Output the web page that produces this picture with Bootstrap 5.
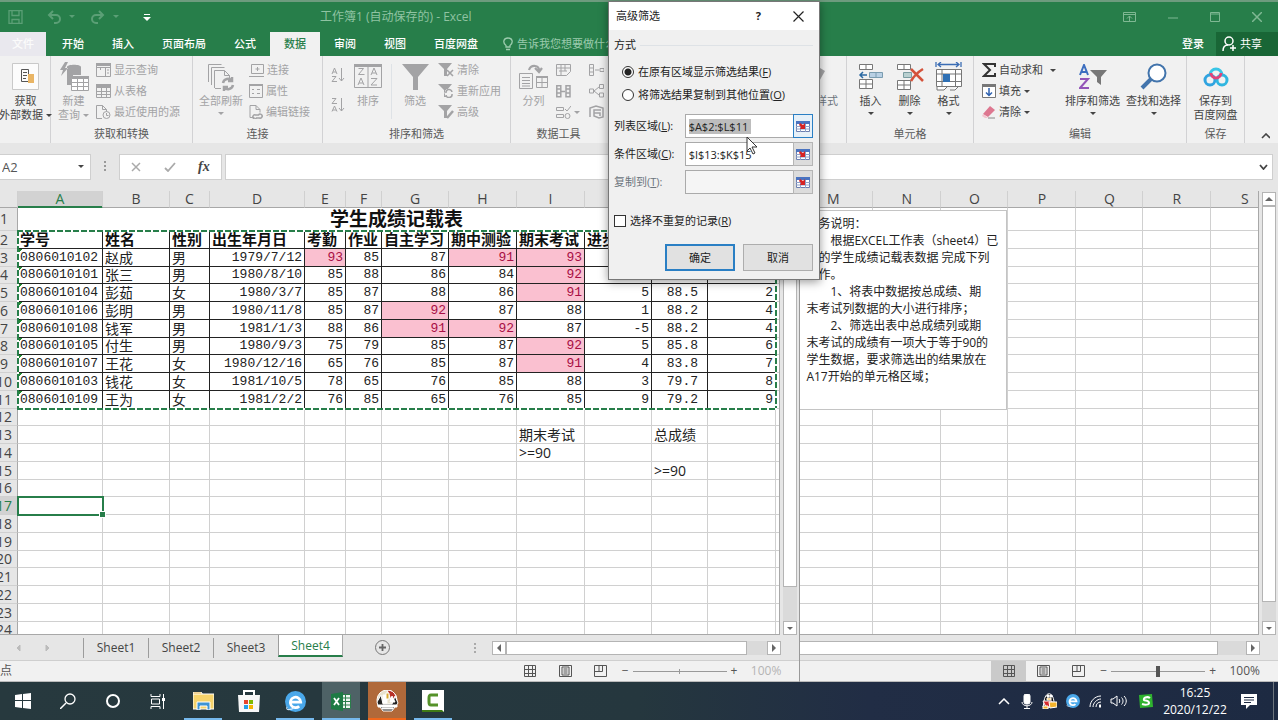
<!DOCTYPE html>
<html lang="zh-CN">
<head>
<meta charset="utf-8">
<meta name="viewport" content="width=device-width, initial-scale=1">
<title>工作簿1 - Excel</title>
<link rel="stylesheet" href="https://cdn.jsdelivr.net/npm/bootstrap@5.3.0/dist/css/bootstrap.min.css">
<style>
:root{--xl:#277e4a;--line:#d0d0d0;--dim:#a3a3a5;--ui:"Open Sans","Noto Sans CJK SC",sans-serif}
html,body{height:100%}
body{font:11px/14px var(--ui);color:#444;background:#e6e6e6;overflow:hidden}
svg{display:block;flex:none;fill:none;stroke:currentColor}
button{font:inherit;color:inherit;background:none;border:0;padding:0}
.titlebar{height:32px;background:var(--xl);border-top:2px solid #6d9b7e;color:#8fc3a2;font-size:12px}
.qat{width:320px;padding-left:8px;color:#5b9f76}
.winbtns{padding-right:16px;color:#7fb893;gap:32px}
.tabs{height:24px;background:var(--xl);color:#fff}
.tabs a{color:#fff;text-decoration:none;padding:0 14px;height:24px;line-height:23px;font-weight:500;white-space:nowrap}
.tabs a.filetab{background:#e9e8ee;color:#fbfbfb;width:46px;margin-right:2px;padding:0 12px}
.tabs a.current{background:#f1f1f1;color:var(--xl)}
.tell{color:#9bcbad;padding-left:11px}
.share{background:#196636;height:24px;padding:0 16px 0 6px}
.ribbon{height:88px;background:#f1f1f1}
.grp{padding-top:4px;border-right:1px solid #d2d2d4;flex:none}
.grp .tools{height:63px}
.grp .caption{text-align:center;line-height:21px;color:#5a5a5a;white-space:nowrap}
.big{display:flex;flex-direction:column;align-items:center;white-space:nowrap;height:63px}
.big .pic{height:34px;display:flex;align-items:center}
.off{color:var(--dim)}
.smallcol button{display:flex;align-items:center;height:21px;gap:3px;white-space:nowrap}
.dn{display:inline-block;border:3px solid transparent;border-top-color:currentColor;border-bottom:0;vertical-align:middle}
.g-get{width:51px}.g-query{width:142px}.g-link{width:130px}.g-sort{width:188px}.g-tools{width:120px}.g-cells{width:127px}.g-edit{width:213px}.g-save{width:58px}
.g-get .big{width:51px}.g-query .big{width:45px}.g-link .big{width:56px}.g-cells .big{width:39px}.g-edit .big{width:61px}.g-save .big{width:57px}
.g-edit .smallcol{width:76px}
.g-tools .smallcol{width:33px}
.fxrow{padding:11px 5px 0 0;height:49px}
.fxrow>*{height:26px;background:#fff;border:1px solid #cfcfcf}
.namebox{width:91px;border-left:0;padding-right:6px}
.namebox input{width:70px;border:0;font:13px var(--ui);color:#555;padding:0 2px}
.fxrow .grip{width:28px;border:0;background:none}
.fxrow .fxbtns{width:103px;margin-right:3px}
.fxrow .fx{border:0;font:13px var(--ui)}
.fxname{font:italic bold 14px "Liberation Serif",serif}
.panes{min-height:0}
.pane-l{flex:800 1 0}.pane-r{flex:478 1 0}
.pane-l,.pane-r{min-width:0;overflow:hidden}
.pane-r{border-left:1px solid #999}
.gridwrap{background:#fff;border-right:1px solid #a8a8a8;border-bottom:1px solid #a8a8a8;overflow:hidden;position:relative;min-width:0}
.gridarea{min-height:0;overflow:hidden}
table.sheet{table-layout:fixed;border-collapse:separate;border-spacing:0;width:1px}
.pane-l table.sheet{margin-left:-9px}
.sheet th,.sheet td{padding:0 2px;height:18px;line-height:17px;border-right:1px solid var(--line);border-bottom:1px solid var(--line);white-space:nowrap;font-size:14px;font-weight:400;color:#222;overflow:visible}
.sheet tbody tr:nth-child(4n)>*{height:17px;line-height:16px}
.sheet thead th{background:#e6e6e6;text-align:center;border-bottom-color:#a8a8a8;font:14px/16px var(--ui);color:#444;height:17px}
.pane-r .sheet thead th:first-child{padding-right:8px}
.sheet tbody th{background:#e6e6e6;text-align:center;border-right-color:#a8a8a8;font-family:var(--ui);color:#444;padding:0}
.sheet tbody tr:first-child>*{height:23px;line-height:22px}
.sheet thead th.hot{background:#d2d2d2;color:var(--xl);box-shadow:inset 0 -1px var(--xl);border-bottom-color:var(--xl)}
.sheet tbody th.hot{background:#d2d2d2;color:var(--xl)}
.sheet td.heading{font-size:19px;font-weight:700;text-align:center;color:#111}
.sheet td.bk{border-color:#222}
.sheet td.hd{font-size:15px;font-weight:700;color:#111}
.sheet td.num{font:13px/17px "Liberation Mono",monospace;text-align:right}
.sheet tr:nth-child(4n) td.num{line-height:16px}
.sheet td.ids{text-align:left;background:linear-gradient(135deg,#1e8a2e 3px,transparent 3px)}
.sheet td.avg{padding-right:9px}
.sheet td.hi{background:#fac0d0;color:#a80f45}
.sheet td.sel{position:relative;outline:2px solid var(--xl);outline-offset:-1px}
.sheet td.sel::after{content:"";position:absolute;right:-3px;bottom:-3px;width:5px;height:5px;background:var(--xl);box-shadow:0 0 0 1px #fff}
.ants{position:absolute;left:17px;top:39px;width:760px;height:180px;pointer-events:none;
background:repeating-linear-gradient(90deg,var(--xl) 0 6px,#fff 6px 8px) 0 0/100% 2px no-repeat,repeating-linear-gradient(90deg,var(--xl) 0 6px,#fff 6px 8px) 0 100%/100% 2px no-repeat,repeating-linear-gradient(var(--xl) 0 6px,#fff 6px 8px) 0 0/2px 100% no-repeat,repeating-linear-gradient(var(--xl) 0 6px,#fff 6px 8px) 100% 0/2px 100% no-repeat}
.note{position:absolute;left:0;top:19px;width:207px;height:200px;background:#fff;border:1px solid #c4c4c4;border-left:0;padding:4px 6px;font:12px/17px var(--ui);color:#222;white-space:pre}
.vscroll{width:14px;margin:1px 2px 0 3px;background:#dadada}
.arrowbox{width:14px;height:14px;background:#fff;border:1px solid #b4b4b4;display:flex;align-items:center;justify-content:center;flex:none;color:#666}
.vthumb{background:#fff;border:1px solid #b4b4b4}
.pane-l .vthumb{margin-bottom:34px}.pane-r .vthumb{margin-bottom:19px}
.sheetbar{height:26px;border-bottom:1px solid #cfcfcf}
.sheetnav{width:83px;color:#bbb}
.hscroll{height:14px;background:#dadada;margin:6px 18px 0 0}
.pane-l .hscroll{width:289px}
.hthumb{background:#fff;border:1px solid #b4b4b4;margin-right:20px}
.sheettab{height:20px;width:65px;border-left:1px solid #9c9c9c!important;font:12px/16px var(--ui);margin-top:3px;text-align:center}
.sheettab.current{background:#fff;color:var(--xl);border-bottom:2px solid var(--xl)!important;height:23px;margin-top:-1px;border-right:1px solid #aaa!important;line-height:24px}
.status{height:21px;background:#f1f1f1;font-size:12px;border-bottom:1px solid #bbb;color:#555;padding-right:18px}
.view{width:35px;height:20px;display:flex;align-items:center;justify-content:center}
.view.on{background:#cacaca}
.zoomer{appearance:none;width:94px;height:12px;background:linear-gradient(#999,#999) 0 50%/100% 1px no-repeat;margin:0 4px}
.zoomer::-webkit-slider-thumb{appearance:none;width:4px;height:11px;background:#555}
.zoomer.idle::-webkit-slider-thumb{width:1px;height:5px;background:#999}
.pct{width:44px;text-align:right;color:#555}
.pct.dimmed{color:#b4b4b4}
.taskbar{height:38px;background:linear-gradient(90deg,#27393e 0,#25373e 50%,#212d45 68%,#1d2a42 100%);color:#fff}
.taskbar .tb{width:45px;height:38px;display:flex;align-items:center;justify-content:center}
.taskbar .app{width:46px;border-left:4px solid transparent;border-right:4px solid transparent;background-clip:padding-box}
.run{box-shadow:inset 0 -2px #76b9ed}
.tb.xl-app{background-color:#4e6266}
.tb.rec-app{background-color:#b0693a;box-shadow:inset 0 -2px #f0671c}
.tray .ti{width:23px;display:flex;justify-content:center}
.clock{font-size:12px;line-height:17px;width:68px}
.dlg{position:absolute;left:608px;top:1px;width:212px;height:279px;background:#f0f0f0;border:1px solid #777;box-shadow:0 2px 9px rgba(0,0,0,.4);color:#222;z-index:5}
.dlg .cap{height:28px;background:#fff;padding:0 15px 0 7px}
.dlg .inner{padding:8px 6px 0 5px}
.dlg label{white-space:nowrap}
.dlg input[type=radio],.dlg input[type=checkbox]{appearance:none;width:12px;height:12px;border:1px solid #333;background:#fff;margin:0;flex:none}
.dlg input[type=radio]{border-radius:50%}
.dlg input[type=radio]:checked{background:radial-gradient(#222 0 3px,#fff 4px)}
.opt{height:23px;gap:4px;padding-left:8px}
.field{height:24px;margin-bottom:4px}
.field label{width:71px}
.field input{width:109px;min-width:0;height:24px;border:1px solid #aaa;border-right:0;background:#fff;font:11px var(--ui);padding:0 3px;color:#222}
.field input.picked{background:linear-gradient(#bdbdbd,#bdbdbd) 3px 50%/62px 15px no-repeat,#fff}
.field input:disabled{background:#f5f5f5}
.field button{width:20px;height:24px;border:1px solid #b5b5b5;background:#dcdcdc;display:flex;align-items:center;justify-content:center}
.field button.focus{border-color:#2a7fc4;background:#e6f0f8}
.act{width:70px;height:27px;background:#e1e1e1;border:1px solid #adadad}
.act.primary{border:2px solid #2a7fc4}
.pointer{position:absolute;left:137px;top:134px}
</style>
</head>
<body class="d-flex flex-column">
<svg width="0" height="0" class="position-absolute" aria-hidden="true">
<defs>
<g id="i-grid"><path d="M.5 .5h11v11h-11zM4.500 .5v11M8.500 .5v11M.5 4.500h11M.5 8.500h11"/></g>
<g id="i-page"><path d="M.5 .5h12v11h-12zM3 2h7v8H3zM4.500 4h4M4.500 6h4M4.500 8h4"/></g>
<g id="i-break"><path d="M.5 .5h12v11h-12zM.5 6.500h8v-6M5 .5v6"/></g>
<g id="i-fun"><path fill="currentColor" stroke="none" d="M0 0h14L9 6v7H6V6z"/></g>
<g id="i-pick"><path fill="#fff" stroke="#6b7fb0" d="M.5 .5h13v10h-13z"/><path fill="#4a73c0" stroke="none" d="M0 0h14v3H0z"/><path stroke="#8fa0c8" d="M0 5.500h14M0 8h14M4.500 3v8M9.500 3v8"/><path fill="#d62222" stroke="none" d="M4 2l3 2 2-2v6H4l1-2-2-2z"/></g>
<g id="i-ie"><circle cx="10" cy="10" r="10" fill="#4aa8ea" stroke="none"/><path stroke="#fff" stroke-width="2.600" d="M5 10.500h10a5 5 0 1 0-1.500 4"/><path stroke="#cfe9ff" d="M2 15C0 19 6 18 9 16"/></g>
</defs>
</svg>

<header class="titlebar d-flex align-items-center">
  <div class="qat d-flex align-items-center">
    <svg width="15" height="14" viewBox="0 0 15 14"><path d="M1 .5h13v13H1zM4 .5v5h7v-5M4 13.500v-4h7v4" stroke-width="1.300"/></svg>
    <svg width="14" height="14" viewBox="0 0 14 14" class="ms-4"><path stroke-width="2" d="M6 1L2 5l4 4M2 5h7a4 4 0 0 1 0 8H7"/></svg><i class="dn ms-2"></i>
    <svg width="14" height="14" viewBox="0 0 14 14" class="ms-3"><path stroke-width="2" d="M8 1l4 4-4 4M12 5H5a4 4 0 0 0 0 8h2"/></svg><i class="dn ms-2"></i>
    <svg width="8" height="8" viewBox="0 0 8 8" class="ms-4 text-white"><path d="M1 1.500h6"/><path fill="currentColor" stroke="none" d="M0 4h8L4 8z"/></svg>
  </div>
  <div class="flex-grow-1">工作簿1 (自动保存的) - Excel</div>
  <div class="winbtns d-flex align-items-center lh-1">
    <svg width="13" height="10" viewBox="0 0 13 10"><path d="M.5 .5h12v9H.5zM.5 2.500h12M6.500 9V4M4 6.500L6.500 4 9 6.500"/></svg>
    <svg width="10" height="10" viewBox="0 0 10 10"><path d="M0 6h10"/></svg>
    <svg width="10" height="10" viewBox="0 0 10 10"><path d="M.5 .5h9v9h-9zM0 2h10"/></svg>
    <svg width="10" height="10" viewBox="0 0 10 10"><path stroke-width="1.500" d="M0 0l10 10M10 0L0 10"/></svg>
  </div>
</header>

<nav class="tabs d-flex align-items-center">
  <a href="#" class="filetab">文件</a><a href="#">开始</a><a href="#">插入</a><a href="#">页面布局</a><a href="#">公式</a><a href="#" class="current">数据</a><a href="#">审阅</a><a href="#">视图</a><a href="#">百度网盘</a>
  <div class="tell d-flex align-items-center gap-1 text-nowrap flex-grow-1">
    <svg width="10" height="14" viewBox="0 0 10 14"><path stroke-width="1.300" d="M3 10V8.500C-1 5 1 1 5 1s6 4 2 7.500V10zM3 12.500h4"/></svg>告诉我您想要做什么...</div>
  <a href="#" class="pe-2 me-1">登录</a>
  <button class="share d-flex align-items-center gap-1 text-nowrap"><svg width="14" height="15" viewBox="0 0 14 15"><circle cx="7" cy="5" r="4" stroke-width="1.500"/><path stroke-width="1.500" d="M1 15c0-4 2-6 5-6M8 12h6M11 9v6"/></svg>共享</button>
</nav>

<div class="ribbon d-flex overflow-hidden">
  <div class="grp g-get"><button class="big"><span class="pic"><svg width="27" height="27" viewBox="0 0 27 27"><path fill="#fcfcfc" stroke="#c9c9c9" d="M.5 .5h26v26H.5z"/><path stroke="#555" d="M9.500 6.500h7v12h-7zM11 9.500h4M11 12.500h4M11 15.500h3"/><path fill="#e9b565" stroke="none" d="M16 11h6v9h-6z"/></svg></span><span>获取</span><span>外部数据 <i class="dn"></i></span></button></div>

  <div class="grp g-query"><div class="tools d-flex off">
    <button class="big"><span class="pic"><svg width="30" height="30" viewBox="0 0 30 30"><path fill="currentColor" stroke="none" d="M6 0L1 8h3l-2 6 7-8H6l3-6zM8 5c0-3 14-3 14 0v8h-8v10H8zM12 14h18v3H12z"/><path fill="#fff" d="M12.500 16.500h17v12h-17zM12 20.500h18M12 24.500h18M18.500 16v12M24.500 16v12"/></svg></span><span>新建</span><span>查询 <i class="dn"></i></span></button>
    <div class="smallcol">
      <button><svg width="15" height="14" viewBox="0 0 15 14"><path d="M.5 .5h14v13H.5zM0 4.500h15M9.500 4v9M11 7h2M11 10h2M4.500 4v3"/><path fill="currentColor" stroke="none" d="M0 0h15v3H0z"/></svg>显示查询</button>
      <button><svg width="15" height="14" viewBox="0 0 15 14"><path d="M.5 .5h14v13H.5zM0 7.500h15M0 10.500h15M5.500 4v9M10.500 4v9"/><path fill="currentColor" stroke="none" d="M0 0h15v4H0z"/></svg>从表格</button>
      <button><svg width="15" height="14" viewBox="0 0 15 14"><path d="M6 13.500H.5V.5h6l4 4v2M6.500 .5v4h4"/><circle cx="10.500" cy="10" r="3.500"/><path d="M10.500 8v2.500h2"/></svg>最近使用的源</button>
    </div></div><div class="caption">获取和转换</div></div>

  <div class="grp g-link"><div class="tools d-flex off">
    <button class="big"><span class="pic"><svg width="28" height="28" viewBox="0 0 28 28"><path d="M1.500 19V1.500h13M4.500 22V4.500h13M7.500 25V7.500h10l5 5v3M17.500 7.500v5h5M8 25.500h6"/><path stroke-width="2.500" d="M16 20a5 5 0 0 1 9-2M26 22a5 5 0 0 1-9 2M25 14v4h-4M17 28v-4h4"/></svg></span><span>全部刷新</span><i class="dn mt-1"></i></button>
    <div class="smallcol">
      <button><svg width="15" height="13" viewBox="0 0 15 13"><path d="M2.500 .5h12v9h-12zM0 12.500h15M8.500 3v4M6.500 5h4"/></svg>连接</button>
      <button><svg width="14" height="14" viewBox="0 0 14 14"><path d="M.5 .5h13v13H.5zM3 5.500h2M8 5.500h3M3 9.500h2M8 9.500h3"/><path stroke-width="2" d="M0 1h14"/></svg>属性</button>
      <button><svg width="14" height="14" viewBox="0 0 13 14"><path d="M5 12.500H.5V.5h6l4 4v3M6.500 .5v4h4"/><path stroke-width="1.500" d="M6 10a2 2 0 1 0 1 3h3a2 2 0 1 0-1-3z"/></svg>编辑链接</button>
    </div></div><div class="caption">连接</div></div>

  <div class="grp g-sort"><div class="tools d-flex off">
    <div class="d-flex flex-column gap-3 pt-2 ps-2">
      <button><svg width="14" height="14" viewBox="0 0 14 14"><path d="M1 6l2.500-6L6 6M2 4h3M1 8.500h4l-4 5h5M10.500 0v13M8 10l2.500 3L13 10"/></svg></button>
      <button><svg width="14" height="14" viewBox="0 0 14 14"><path d="M1 .5h4L1 5.500h5M1 13.500L3.500 8 6 13.500M2 12h3M10.500 0v13M8 10l2.500 3L13 10"/></svg></button></div>
    <button class="big ms-2"><span class="pic"><svg width="28" height="25" viewBox="0 0 28 25"><path d="M.5 .5h27v23H.5zM14 3v20M4.500 4.500h5l-5 6h6M4 21l3-7 3 7M5 19h4M17 11l3-7 3 7M18 9h4M17 14.500h6l-6 6.500h6"/><path fill="currentColor" stroke="none" d="M0 0h28v3H0z"/></svg></span><span class="px-1">排序</span></button>
    <div class="border-start mx-2 my-1"></div>
    <button class="big"><span class="pic"><svg width="27" height="26" viewBox="0 0 27 26"><path fill="currentColor" stroke="none" d="M0 0h27L16 13v13h-5V13z"/></svg></span><span class="px-1">筛选</span></button>
    <div class="smallcol ps-2">
      <button><svg width="16" height="14" viewBox="0 0 16 14"><use href="#i-fun"/><path stroke-width="1.600" d="M9 7l6 6M15 7l-6 6"/></svg>清除</button>
      <button><svg width="16" height="14" viewBox="0 0 16 14"><use href="#i-fun"/><circle cx="11" cy="9" r="4" stroke="#f1f1f1" fill="#f1f1f1"/><path stroke-width="1.500" d="M8 9a3 3 0 0 1 6-1M14 10a3 3 0 0 1-6 1"/></svg>重新应用</button>
      <button><svg width="16" height="14" viewBox="0 0 16 14"><use href="#i-fun"/><path stroke-width="2.500" d="M9 13l6-7"/></svg>高级</button>
    </div></div><div class="caption">排序和筛选</div></div>

  <div class="grp g-tools"><div class="tools d-flex off">
    <button class="big mx-2"><span class="pic"><svg width="29" height="26" viewBox="0 0 29 26"><path d="M.5 9.500h13v15H.5zM3 13.500h8M3 16.500h8M3 19.500h8M3 22h8M17.500 12.500h11v11h-11zM23 14v9M18 18.500h10"/><path stroke-width="2.200" d="M10 6c2-6 11-5 10 1M16 4l4 4 3-4"/><path stroke-width="2" d="M17 13h12"/></svg></span><span>分列</span></button>
    <div class="smallcol">
      <button><svg width="15" height="14" viewBox="0 0 15 14"><path d="M.5 1.500h14v7l-4 4H.5zM0 5h14M3 8h8M5 2v10M9 2v6"/></svg></button>
      <button><svg width="15" height="13" viewBox="0 0 15 13"><path stroke-width="1.500" d="M.8 .8h4v11h-4zM10 .8h4v11h-4zM5 6.500h4M1 4h3M1 8h3M10 4h4M10 8h4"/></svg></button>
      <button><svg width="15" height="13" viewBox="0 0 15 13"><path d="M.5 1.500h7v3h-7zM.5 8.500h7v3h-7zM9 3l2 2 4-5"/><circle cx="11.500" cy="10" r="2.500"/></svg><i class="dn"></i></button></div>
    <div class="smallcol">
      <button><svg width="15" height="13" viewBox="0 0 15 13"><path d="M.5 .5h4v11h-4zM1 4h3M1 8h3M6 6h4M11 4.500h4v3h-4z"/></svg></button>
      <button><svg width="15" height="14" viewBox="0 0 15 14"><path d="M.5 5h4v4h-4zM10.500 .5h4v4h-4zM10.500 9h4v4h-4zM5 7l5-4M5 7l5 4"/></svg></button>
      <button><svg width="15" height="14" viewBox="0 0 15 14"><path stroke-width="1.500" d="M1 12V3l6-2 7 2v9l-4 1-5-2V5h7M5 8h6v3"/></svg></button></div>
  </div><div class="caption pe-4">数据工具</div></div>

  <div class="grp ms-auto pe-2"><button class="big off"><span class="pic"><svg width="30" height="28" viewBox="0 0 30 28"><path d="M.5 3.500h22v18H.5z"/><path fill="currentColor" stroke="none" d="M13 19L24 5l5 3-8 14-8 2z"/></svg></span><span class="text-secondary">单元格样式</span></button></div>

  <div class="grp g-cells"><div class="tools d-flex ps-1">
    <button class="big"><span class="pic"><svg width="26" height="26" viewBox="0 0 26 26"><path fill="#fff" stroke="#777" d="M1.500 .5h13v5h-13zM8 .5v5M1.500 15.500h13v9h-13zM8 15v9M1.500 20h13"/><path fill="#b9d0e4" stroke="#7a9cb0" d="M11.500 8.500h13v5h-13zM18 8v5"/><path stroke="#2c6aa3" stroke-width="1.500" d="M9 11H2M5 8l-3 3 3 3"/></svg></span><span>插入</span><i class="dn mt-1"></i></button>
    <button class="big"><span class="pic"><svg width="28" height="26" viewBox="0 0 28 26"><path fill="#fff" stroke="#777" d="M1.500 .5h13v5h-13zM8 .5v5M1.500 16.500h13v9h-13zM8 16v9M1.500 21h13"/><path fill="#b9d0d0" stroke="#7a9ca0" d="M7.500 8.500h8v5h-8z"/><path stroke="#d4523a" stroke-width="2.500" d="M15 5l12 12M27 5C22 8 18 12 15 17"/></svg></span><span>删除</span><i class="dn mt-1"></i></button>
    <button class="big"><span class="pic"><svg width="27" height="29" viewBox="0 0 27 29"><path stroke="#3a6cb4" stroke-width="1.300" d="M1 0v5M26 0v5M3 2.500h21M6 0L3 2.500 6 5M21 0l3 2.500L21 5"/><path fill="#fff" stroke="#777" d="M1.500 7.500h25v17h-25zM7 7v17M20.500 7v17M1 12h26M1 19.500h26M2 25v3h7l3-3M15 28h5l3-3"/><path fill="#2f70b4" stroke="none" d="M8 12h7v8H8z"/></svg></span><span>格式</span><i class="dn mt-1"></i></button>
  </div><div class="caption">单元格</div></div>

  <div class="grp g-edit"><div class="tools d-flex ps-2">
    <div class="smallcol me-1">
      <button><svg width="14" height="14" viewBox="0 0 14 14"><path stroke="#333" stroke-width="2" d="M13 4V1H2l6 6-6 6h11v-3"/></svg>自动求和 <i class="dn ms-1"></i></button>
      <button><svg width="14" height="14" viewBox="0 0 14 14"><path fill="#fff" stroke="#777" d="M.5 .5h13v13H.5z"/><path fill="#777" stroke="none" d="M0 0h14v3H0z"/><path stroke="#2f62b0" stroke-width="1.500" d="M7 4v7M4 8.500l3 3 3-3"/></svg>填充 <i class="dn"></i></button>
      <button><svg width="14" height="13" viewBox="0 0 14 13"><path fill="#dd7790" stroke="none" d="M1 8l7-8 5 4-7 7z"/><path fill="#f3c3cd" stroke="none" d="M1 8l5 4H3L0 10z"/><path d="M6 12h7" stroke="#888"/></svg>清除 <i class="dn"></i></button>
    </div>
    <button class="big"><span class="pic"><svg width="28" height="26" viewBox="0 0 28 26"><path stroke="#3d6fc0" stroke-width="2" d="M1 11L5 1l4 10M2.500 8h5"/><path stroke="#9355b8" stroke-width="2" d="M1 15h8L1 24h9"/><path fill="#777" stroke="none" d="M11 6h17l-6 7v8l-4-3v-5z"/></svg></span><span>排序和筛选</span><i class="dn mt-1"></i></button>
    <button class="big"><span class="pic"><svg width="27" height="27" viewBox="0 0 27 27"><circle cx="17" cy="10" r="8.500" stroke="#4274ac" stroke-width="2" fill="#fff"/><path stroke="#4274ac" stroke-width="4" d="M11 16L2 25"/></svg></span><span>查找和选择</span><i class="dn mt-1"></i></button>
  </div><div class="caption">编辑</div></div>

  <div class="grp g-save"><button class="big"><span class="pic"><svg width="26" height="22" viewBox="0 0 26 22" stroke-width="3"><path stroke="#38c5e6" d="M7 9a6 6 0 1 1 12 0"/><circle cx="7" cy="14" r="5" stroke="#30a4e0"/><circle cx="19" cy="14" r="5" stroke="#30b6e0"/><path stroke="#e0447a" d="M8 7a5 5 0 1 0 10 0"/></svg></span><span>保存到</span><span>百度网盘</span></button><div class="caption">保存</div></div>
  <button class="align-self-end ps-3 pe-2 pb-1"><svg width="9" height="6" viewBox="0 0 9 6"><path stroke-width="1.600" d="M1 5l4-4 4 4"/></svg></button>
</div>

<div class="fxrow d-flex flex-none">
  <div class="namebox d-flex align-items-center justify-content-between"><input value="A2" aria-label="名称框"><i class="dn"></i></div>
  <div class="grip d-flex align-items-center justify-content-center"><svg width="2" height="12" viewBox="0 0 2 12"><path stroke-dasharray="2 2" stroke-width="2" stroke="#999" d="M1 0v12"/></svg></div>
  <div class="fxbtns d-flex align-items-center justify-content-around">
    <button aria-label="取消"><svg width="10" height="10" viewBox="0 0 10 10"><path stroke="#aaa" stroke-width="1.500" d="M1 1l8 8M9 1L1 9"/></svg></button>
    <button aria-label="输入"><svg width="12" height="10" viewBox="0 0 12 10"><path stroke="#aaa" stroke-width="1.800" d="M1 6l3 3 7-8"/></svg></button>
    <button class="fxname">fx</button></div>
  <div class="flex-grow-1 d-flex align-items-center pe-1"><input class="fx flex-grow-1" aria-label="编辑栏"><svg width="9" height="6" viewBox="0 0 9 6"><path stroke-width="1.800" d="M1 1l3.500 4L8 1"/></svg></div>
</div>

<main class="panes d-flex flex-grow-1 pt-0">
  <section class="pane-l d-flex flex-column">
    <div class="gridarea d-flex flex-grow-1">
      <div class="gridwrap flex-grow-1"><table class="sheet" id="left"></table><div class="ants"></div></div>
      <div class="vscroll d-flex flex-column"><span class="arrowbox"><i class="dn"></i></span><span class="vthumb flex-grow-1"></span><span class="arrowbox"><i class="dn"></i></span></div>
    </div>
    <div class="sheetbar d-flex">
      <div class="sheetnav d-flex align-items-center ps-3"><svg width="5" height="6" viewBox="0 0 5 6"><path fill="currentColor" d="M4 0v6L1 3z"/></svg><svg class="ms-4" width="5" height="6" viewBox="0 0 5 6"><path fill="currentColor" d="M1 0v6l3-3z"/></svg></div>
      <button class="sheettab">Sheet1</button><button class="sheettab">Sheet2</button><button class="sheettab">Sheet3</button><button class="sheettab current">Sheet4</button>
      <button class="ms-4 ps-2" aria-label="新工作表"><svg width="15" height="15" viewBox="0 0 15 15"><circle cx="7.500" cy="7.500" r="7" stroke="#777"/><path stroke="#666" stroke-width="1.800" d="M4 7.500h7M7.500 4v7"/></svg></button>
      <div class="flex-grow-1 d-flex align-items-center justify-content-end pe-3"><svg width="2" height="10" viewBox="0 0 2 10"><path stroke-dasharray="2 2" stroke-width="2" stroke="#aaa" d="M1 0v10"/></svg></div>
      <div class="hscroll d-flex"><span class="arrowbox"><svg width="4" height="8" viewBox="0 0 4 8"><path fill="currentColor" stroke="none" d="M4 0v8L0 4z"/></svg></span><span class="hthumb flex-grow-1"></span><span class="arrowbox"><svg width="4" height="8" viewBox="0 0 4 8"><path fill="currentColor" stroke="none" d="M0 0v8l4-4z"/></svg></span></div>
    </div>
    <div class="status d-flex align-items-center"><span class="flex-grow-1">点</span>
      <button class="view"><svg width="12" height="12"><use href="#i-grid"/></svg></button><button class="view"><svg width="13" height="12"><use href="#i-page"/></svg></button><button class="view"><svg width="13" height="12"><use href="#i-break"/></svg></button>
      <button class="ms-1">−</button><input type="range" class="zoomer idle" aria-label="缩放"><button>+</button><span class="pct dimmed">100%</span></div>
  </section>
  <section class="pane-r d-flex flex-column">
    <div class="gridarea d-flex flex-grow-1">
      <div class="gridwrap flex-grow-1"><table class="sheet" id="right"></table>
<div class="note">任务说明：
　　根据EXCEL工作表（sheet4）已
有的学生成绩记载表数据 完成下列
操作。
　　1、将表中数据按总成绩、期
末考试列数据的大小进行排序；
　　2、筛选出表中总成绩列或期
末考试的成绩有一项大于等于90的
学生数据，要求筛选出的结果放在
A17开始的单元格区域；</div></div>
      <div class="vscroll d-flex flex-column"><span class="arrowbox"><svg width="8" height="4" viewBox="0 0 8 4"><path fill="currentColor" stroke="none" d="M0 4h8L4 0z"/></svg></span><span class="vthumb flex-grow-1"></span><span class="arrowbox"><i class="dn"></i></span></div>
    </div>
    <div class="sheetbar d-flex"><div class="hscroll d-flex flex-grow-1"><span class="hthumb flex-grow-1 border-start-0 me-4"></span><span class="arrowbox ms-1"><svg width="4" height="8" viewBox="0 0 4 8"><path fill="currentColor" stroke="none" d="M0 0v8l4-4z"/></svg></span></div></div>
    <div class="status d-flex align-items-center justify-content-end">
      <button class="view on"><svg width="12" height="12"><use href="#i-grid"/></svg></button><button class="view"><svg width="13" height="12"><use href="#i-page"/></svg></button><button class="view"><svg width="13" height="12"><use href="#i-break"/></svg></button>
      <button class="ms-1">−</button><input type="range" class="zoomer" aria-label="缩放"><button>+</button><span class="pct">100%</span></div>
  </section>
</main>

<footer class="taskbar d-flex flex-none">
  <button class="tb"><svg width="16" height="16" viewBox="0 0 16 16"><path fill="#fff" stroke="none" d="M0 2l7-1v6H0zM8 1l8-1v7H8zM0 8h7v7l-7-1zM8 8h8v8l-8-1z"/></svg></button>
  <button class="tb"><svg width="16" height="16" viewBox="0 0 16 16"><circle cx="10" cy="6" r="5" stroke-width="1.300"/><path stroke-width="1.500" d="M6 10l-6 6"/></svg></button>
  <button class="tb"><svg width="16" height="16" viewBox="0 0 16 16"><circle cx="8" cy="8" r="6" stroke-width="2"/></svg></button>
  <button class="tb"><svg width="16" height="15" viewBox="0 0 16 15"><path d="M1 0v2.500h9V0M1 15v-2.500h9V15M1.500 5h8v5h-8zM13.500 0v15"/><path stroke-width="3" d="M13.500 4v3"/></svg></button>
  <button class="tb app run"><svg width="21" height="18" viewBox="0 0 21 18" stroke="none"><path fill="#e0a72e" d="M0 0h8l2 3H0z"/><path fill="#f6d36b" d="M0 2h21v15H0z"/><path fill="#3e94d4" d="M4 10h13v8h-3v-4H7v4H4z"/></svg></button>
  <button class="tb app"><svg width="22" height="22" viewBox="0 0 22 22"><path stroke="#fff" stroke-width="2" d="M6 6V1h10v5"/><path fill="#f7f7f7" stroke="none" d="M0 5h22l-1 17H1z"/><path fill="#e5452b" stroke="none" d="M6 10h4v4H6z"/><path fill="#7fba00" stroke="none" d="M11 10h4v4h-4z"/><path fill="#23a0e8" stroke="none" d="M6 15h4v4H6z"/><path fill="#f5b400" stroke="none" d="M11 15h4v4h-4z"/></svg></button>
  <button class="tb app run"><svg width="21" height="21" viewBox="0 0 20 20"><use href="#i-ie"/></svg></button>
  <button class="tb app run xl-app"><svg width="21" height="19" viewBox="0 0 21 19"><path fill="#eef5f0" stroke="#2a7d4a" d="M10 2.500h9.500v14H10zM14.500 3v13M10 6h9M10 9.500h9M10 13h9"/><path fill="#1e7a44" stroke="none" d="M0 2l12-2v19L0 17z"/><path stroke="#fff" stroke-width="1.800" d="M3 6l5 7M8 6l-5 7"/></svg></button>
  <button class="tb app rec-app"><svg width="23" height="22" viewBox="0 0 23 22" stroke="none"><circle cx="11" cy="10" r="10" fill="#e8e2cf"/><path fill="#b83028" d="M11 0a10 10 0 0 1 9 6l-4 6z"/><path fill="#222" d="M1 12l4-7 2 9h9l3-8 3 7-2 3H2z"/><path fill="#fff" d="M7 5h4v8H7zM16 6l3 6h-5z"/><path fill="#d8a830" d="M10 3h3v6h-3z"/><path fill="#fff" d="M2 15h19v2H2z"/><path fill="#222" d="M4 17h15l-3 4H7z"/><path fill="#eee" d="M6 18h11v1H6z"/></svg></button>
  <button class="tb app run"><svg width="22" height="22" viewBox="0 0 22 22"><path fill="#fff" stroke="none" d="M0 0h22v22H0z"/><path fill="#3f7a16" stroke="none" d="M0 20h20l2 2H0z"/><path stroke="#55922a" stroke-width="3" d="M16 5H9c-2 0-2 1-2 3v4c0 2 0 3 2 3h7"/></svg></button>
  <div class="tray d-flex align-items-center ms-auto">
    <span class="ti"><svg width="12" height="7" viewBox="0 0 12 7"><path stroke-width="1.500" d="M1 6l5-5 5 5"/></svg></span>
    <span class="ti"><svg width="12" height="15" viewBox="0 0 12 15"><rect x="3" width="6" height="10" rx="2" fill="#fff"/><path d="M1 8c0 5 10 5 10 0M6 12v3M3 14.500h6"/></svg></span>
    <span class="ti"><svg width="15" height="16" viewBox="0 0 15 16" stroke="none"><path fill="#111" d="M2 9C3-2 11-2 12 9l1 5H1z"/><path fill="#f5b52c" d="M5 5h4v2H5z"/><path fill="#fff" d="M5 2h2v2H5zM8 2h2v2H8z"/><path fill="#d3282e" d="M1 8h9v6H4z"/><path fill="#f3b32c" d="M7 9h8v5l-7 1zM1 13h5v3H1z"/></svg></span>
    <span class="ti"><svg width="14" height="14" viewBox="0 0 20 20"><use href="#i-ie"/></svg></span>
    <span class="ti"><svg width="13" height="13" viewBox="0 0 13 13"><path d="M1 12C1 6 6 1 12 1M4 12c0-4 4-8 8-8M7 12c0-3 2-5 5-5"/><path stroke-width="3" d="M10 11h2"/></svg></span>
    <span class="ti"><svg width="17" height="12" viewBox="0 0 17 12"><path d="M1 4h2l4-3v10L3 8H1zM9 4c1 1 1 3 0 4M11.500 2.500c2 2 2 5 0 7M14 1c3 3 3 7 0 10"/></svg></span>
    <span class="ti mx-1"><svg width="14" height="14" viewBox="0 0 14 14"><path fill="#2fb32f" stroke="none" d="M0 1l13-1 1 13-13 1z"/><path stroke="#fff" stroke-width="2" d="M11 4c-3-2-7 0-6 2 1 1 5 0 5 3 0 2-4 2-7 1"/></svg></span>
    <div class="clock text-center">16:25<br>2020/12/22</div>
    <span class="ms-2 ps-1"><svg width="16" height="15" viewBox="0 0 16 15"><path fill="#fff" stroke="none" d="M0 0h16v11H9l-4 4v-4H0z"/><path stroke="#1f2b43" d="M3 3.500h10M3 6h10M3 8.500h7"/></svg></span>
    <span class="border-start border-secondary align-self-stretch ms-3 pe-1"></span>
  </div>
</footer>

<div class="dlg" role="dialog" aria-label="高级筛选">
  <div class="cap d-flex align-items-center"><span class="flex-grow-1">高级筛选</span><button class="fw-bold me-4 pe-2">?</button><button aria-label="关闭"><svg width="11" height="11" viewBox="0 0 11 11"><path stroke-width="1.200" d="M.5 .5l10 10M10.500 .5l-10 10"/></svg></button></div>
  <div class="inner">
    <div class="d-flex align-items-center gap-1 mb-2">方式<span class="flex-grow-1 border-top"></span></div>
    <div class="opt d-flex align-items-center"><input type="radio" name="m" id="m1" checked><label for="m1">在原有区域显示筛选结果(<u>F</u>)</label></div>
    <div class="opt d-flex align-items-center mb-2"><input type="radio" name="m" id="m2"><label for="m2">将筛选结果复制到其他位置(<u>O</u>)</label></div>
    <div class="field d-flex align-items-center"><label for="f1">列表区域(<u>L</u>):</label><input id="f1" class="picked" value="$A$2:$L$11"><button class="focus"><svg width="14" height="11"><use href="#i-pick"/></svg></button></div>
    <div class="field d-flex align-items-center"><label for="f2">条件区域(<u>C</u>):</label><input id="f2" value="$I$13:$K$15"><button><svg width="14" height="11"><use href="#i-pick"/></svg></button></div>
    <div class="field d-flex align-items-center"><label for="f3" class="text-secondary">复制到(<u>T</u>):</label><input id="f3" disabled><button><svg width="14" height="11"><use href="#i-pick"/></svg></button></div>
    <div class="d-flex align-items-center gap-1 pt-3"><input type="checkbox" id="c1"><label for="c1">选择不重复的记录(<u>R</u>)</label></div>
    <div class="d-flex justify-content-end gap-2 pt-3"><button class="act primary">确定</button><button class="act">取消</button></div>
  </div>
  <svg class="pointer" width="13" height="19" viewBox="0 0 13 19"><path fill="#fff" stroke="#333" d="M1 1v14l3-3 3 6 2-1-3-6h5z"/></svg>
</div>

<script src="https://cdn.jsdelivr.net/npm/bootstrap@5.3.0/dist/js/bootstrap.bundle.min.js"></script>
<script>
const heads = ['学号','姓名','性别','出生年月日','考勤','作业','自主学习','期中测验','期末考试','进步分','总成绩','名次'];
const marks = [
 ['0806010102','赵成','男','1979/7/12',93,85,87,91,93,2,'90.2',1],
 ['0806010101','张三','男','1980/8/10',85,88,86,84,92,8,'88.5',2],
 ['0806010104','彭茹','女','1980/3/7',85,87,88,86,91,5,'88.5',2],
 ['0806010106','彭明','男','1980/11/8',85,87,92,87,88,1,'88.2',4],
 ['0806010108','钱军','男','1981/1/3',88,86,91,92,87,-5,'88.2',4],
 ['0806010105','付生','男','1980/9/3',75,79,85,87,92,5,'85.8',6],
 ['0806010107','王花','女','1980/12/16',65,76,85,87,91,4,'83.8',7],
 ['0806010103','钱花','女','1981/10/5',78,65,76,85,88,3,'79.7',8],
 ['0806010109','王为','女','1981/2/2',76,85,65,76,85,9,'79.2',9]];
const extra = {'13-8':'期末考试','14-8':'>=90','13-10':'总成绩','15-10':'>=90'};
const cols = w => '<colgroup>' + w.map(x => `<col style="width:${x}px">`).join('') + '</colgroup>';
const lw = [27,85,67,40,95,41,36,67,68,68,67,56,68,20];
let h = cols(lw) + '<thead><tr><th></th>' + [...'ABCDEFGHIJKLM'].map((c,i) => `<th class="${i?'':'hot'}">${i<12?c:''}</th>`).join('') + '</tr></thead><tbody>';
for (let r = 1; r <= 24; r++) {
  h += `<tr><th class="${r===17?'hot':''}">${r}</th>`;
  if (r === 1) { h += '<td colspan="12" class="heading">学生成绩记载表</td><td></td></tr>'; continue; }
  for (let c = 0; c < 13; c++) {
    let k = '', t = extra[r + '-' + c] || '';
    if (c < 12 && r === 2) { k = 'bk hd'; t = heads[c]; }
    else if (c < 12 && r < 12) {
      t = marks[r-3][c]; k = 'bk';
      if (c === 0 || c > 2) k += ' num';
      if (c === 0) k += ' ids';
      if (c === 10) k += ' avg';
      if (c > 3 && c < 9 && t > 90) k += ' hi';
    }
    if (r === 17 && c === 0) k = 'sel';
    h += `<td class="${k}">${String(t).replace('>','&gt;')}</td>`;
  }
  h += '</tr>';
}
document.getElementById('left').innerHTML = h + '</tbody>';
let g = cols([73,68,67,68,67,68,68]) + '<thead><tr>' + [...'MNOPQRS'].map(c => `<th>${c}</th>`).join('') + '</tr></thead><tbody>';
for (let r = 1; r <= 24; r++) g += '<tr>' + '<td></td>'.repeat(7) + '</tr>';
document.getElementById('right').innerHTML = g + '</tbody>';
</script>
</body>
</html>
